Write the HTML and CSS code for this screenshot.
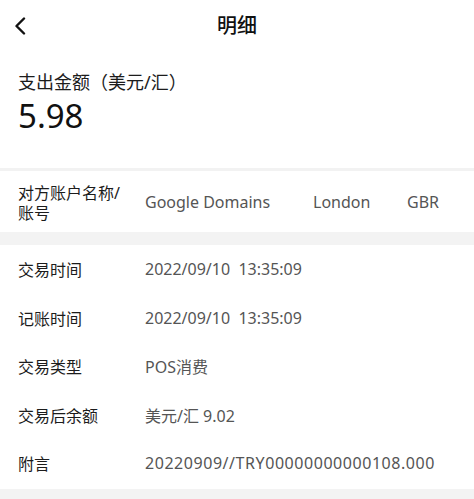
FILE: index.html
```html
<!DOCTYPE html>
<html lang="zh-CN">
<head>
<meta charset="utf-8">
<title>明细</title>
<link rel="stylesheet" href="styles.css">
</head>
<body>
<div class="page">
  <header class="topbar">
    <span class="back" aria-label="返回">
      <svg width="14" height="18" viewBox="0 0 14 18"><path d="M11 1.5 L3.5 9 L11 16.5" fill="none" stroke="#111" stroke-width="2.4" stroke-linecap="round" stroke-linejoin="round"/></svg>
    </span>
    <h1 class="title">明细</h1>
  </header>

  <section class="amount">
    <div class="amount-label">支出金额（美元/汇）</div>
    <div class="amount-value">5.98</div>
  </section>

  <div class="sep-thin"></div>

  <section class="party">
    <div class="party-label">对方账户名称/<br>账号</div>
    <div class="party-values">
      <span class="pv pv-name">Google Domains</span>
      <span class="pv pv-city">London</span>
      <span class="pv pv-country">GBR</span>
    </div>
  </section>

  <div class="sep-thick"></div>

  <section class="details">
    <div class="row"><span class="label">交易时间</span><span class="value">2022/09/10&nbsp;&nbsp;13:35:09</span></div>
    <div class="row"><span class="label">记账时间</span><span class="value">2022/09/10&nbsp;&nbsp;13:35:09</span></div>
    <div class="row"><span class="label">交易类型</span><span class="value">POS消费</span></div>
    <div class="row"><span class="label">交易后余额</span><span class="value">美元/汇 9.02</span></div>
    <div class="row"><span class="label">附言</span><span class="value memo">20220909//TRY00000000000108.000</span></div>
  </section>

  <div class="sep-bottom"></div>
</div>
</body>
</html>
```

FILE: styles.css
```css
* { box-sizing: border-box; }
html, body { margin: 0; padding: 0; background: #fff; }
body {
  font-family: "Noto Sans", "Noto Sans CJK SC", sans-serif;
  color: #1c1c1c;
  width: 474px;
  overflow: hidden;
}
.page { display: flex; flex-direction: column; }

.topbar {
  height: 52px;
  display: flex;
  align-items: center;
  justify-content: center;
  position: relative;
}
.back {
  position: absolute;
  left: 13px;
  top: 17px;
  display: flex;
}
.title {
  margin: 0;
  font-size: 20px;
  font-weight: 500;
  color: #111;
  line-height: 1;
}

.amount {
  padding: 17px 18px 0 18px;
  height: 116px;
}
.amount-label {
  font-size: 18px;
  line-height: 26px;
  color: #1c1c1c;
}
.amount-value {
  font-size: 33px;
  line-height: 40px;
  margin-top: 1px;
  color: #111;
}

.sep-thin { height: 3px; background: #f2f2f2; }

.party {
  height: 61px;
  display: flex;
  align-items: center;
  padding-left: 18px;
}
.party-label {
  width: 127px;
  font-size: 16px;
  line-height: 20px;
  color: #1c1c1c;
  padding-top: 2px;
}
.party-values {
  display: flex;
  font-size: 16px;
  color: #555;
}
.pv-name { width: 168px; }
.pv-city { width: 94px; }

.sep-thick {
  height: 13px;
  background: #f3f3f3;
}

.details { display: flex; flex-direction: column; }
.row {
  height: 48.5px;
  display: flex;
  align-items: center;
  padding-left: 18px;
}
.label {
  width: 127px;
  font-size: 16px;
  color: #1c1c1c;
}
.value {
  font-size: 16px;
  color: #555;
}
.memo { letter-spacing: 0.55px; }

.sep-bottom { height: 20px; background: #f3f3f3; margin-top: 1px; }
```
